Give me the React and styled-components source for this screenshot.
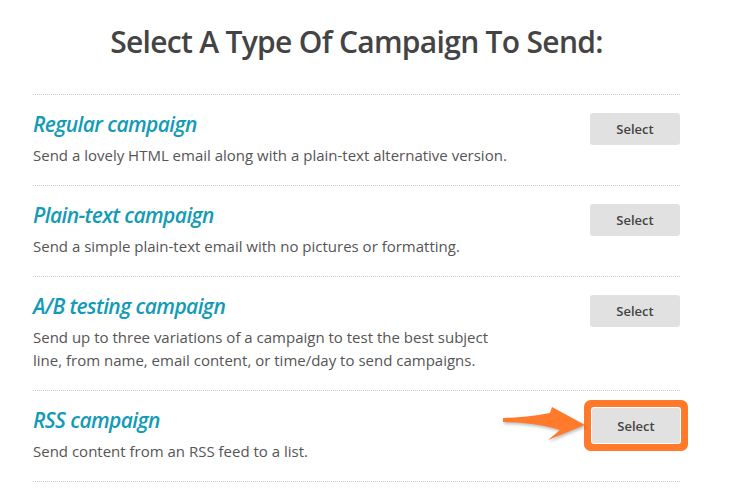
import React from 'react';
import styled, { createGlobalStyle } from 'styled-components';

const GlobalStyle = createGlobalStyle`
    body {
        margin: 0;
        background: #fff;
        font-family: "Open Sans", "Liberation Sans", sans-serif;
    }
`;

const Page = styled.div`
    width: 647px;
    margin-left: 33px;
    padding-top: 21px;
`;

const Title = styled.h1`
    margin: 0 0 32px;
    text-align: center;
    font-size: 30px;
    font-weight: 600;
    line-height: 41px;
    letter-spacing: -0.7px;
    color: #444;
`;

const List = styled.div`
    border-bottom: 1px dotted #ccc;
`;

const Row = styled.div`
    display: flex;
    justify-content: space-between;
    align-items: flex-start;
    border-top: 1px dotted #ccc;
    padding: 15px 0 18px;
`;

const Info = styled.div`
    max-width: 480px;
`;

const Name = styled.h2`
    margin: 0 0 6px;
    font-size: 21px;
    font-weight: 600;
    font-style: italic;
    line-height: 28px;
    letter-spacing: -0.6px;
    color: #139bb6;
`;

const Desc = styled.p`
    margin: 0;
    font-size: 15px;
    line-height: 23px;
    color: #555;
`;

const Action = styled.div`
    position: relative;
    margin-top: 3px;
`;

const SelectButton = styled.button`
    display: block;
    width: 90px;
    height: 32px;
    border: none;
    border-radius: 3px;
    background: #e1e1e1;
    color: #444;
    font-family: inherit;
    font-size: 13px;
    font-weight: 600;
    cursor: pointer;
    ${({ $highlight }) => $highlight && `
        width: 88px;
        height: 35px;
        margin: -1px 0 0 2px;
        border-radius: 2px;
        box-shadow: 0 0 0 1px #fff, 0 0 0 8px #ff7a2a;
    `}
`;

const Arrow = styled.svg`
    position: absolute;
    right: 93px;
    top: -3px;
    width: 84px;
    height: 36px;
    filter: drop-shadow(1px 2px 1.5px rgba(0, 0, 0, 0.25));
`;

const campaigns = [
    {
        name: 'Regular campaign',
        desc: 'Send a lovely HTML email along with a plain-text alternative version.',
    },
    {
        name: 'Plain-text campaign',
        desc: 'Send a simple plain-text email with no pictures or formatting.',
    },
    {
        name: 'A/B testing campaign',
        desc: 'Send up to three variations of a campaign to test the best subject line, from name, email content, or time/day to send campaigns.',
    },
    {
        name: 'RSS campaign',
        desc: 'Send content from an RSS feed to a list.',
        highlight: true,
    },
];

const PointerArrow = () => (
    <Arrow viewBox="0 0 84 36">
        <path
            d="M0 12 C16 11.5 32 10 47 7 L49 1 L82 19 L45 34 L57 24 C38 18 20 16.5 0 16 Z"
            fill="#ff7a2a"
        />
    </Arrow>
);

const App = () => {
    return (
        <Page>
            <GlobalStyle />
            <Title>Select A Type Of Campaign To Send:</Title>
            <List>
                {campaigns.map((c) => (
                    <Row key={c.name}>
                        <Info>
                            <Name>{c.name}</Name>
                            <Desc>{c.desc}</Desc>
                        </Info>
                        <Action>
                            {c.highlight && <PointerArrow />}
                            <SelectButton $highlight={c.highlight}>Select</SelectButton>
                        </Action>
                    </Row>
                ))}
            </List>
        </Page>
    );
};

export default App;
